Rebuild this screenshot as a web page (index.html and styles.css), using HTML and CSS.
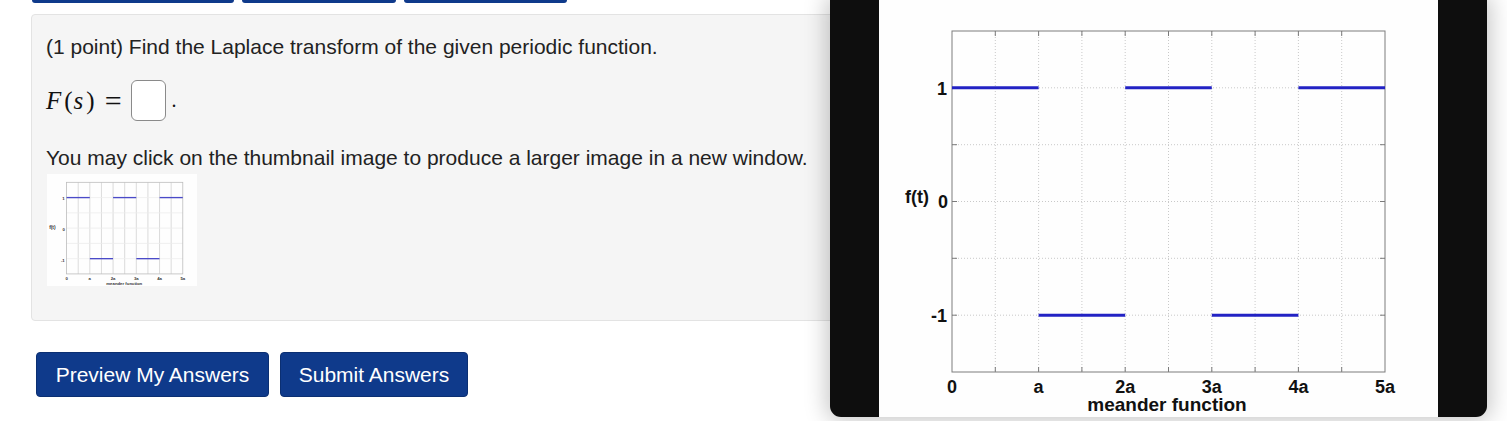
FILE: index.html
```html
<!DOCTYPE html>
<html lang="en">
<head>
<meta charset="utf-8">
<title>Laplace transform problem</title>
<link rel="stylesheet" href="styles.css">
</head>
<body>
<div class="topnav">
  <span class="tbtn w1"></span>
  <span class="tbtn w2"></span>
  <span class="tbtn w3"></span>
</div>

<div class="well">
  <p class="line first">(1 point) Find the Laplace transform of the given periodic function.</p>
  <div class="math">
    <span class="mi f">F</span><span class="mo">(</span><span class="mi s">s</span><span class="mo">)</span>
    <span class="eq">=</span>
    <span class="ans"></span>
    <span class="dot">.</span>
  </div>
  <p class="line second">You may click on the thumbnail image to produce a larger image in a new window.</p>
  <svg class="thumb" viewBox="0 0 559 417" preserveAspectRatio="none">
    <rect class="bg" x="0" y="0" width="559" height="417"/>
    <g class="grid tgrid">
      <line x1="116.3" y1="31" x2="116.3" y2="372"/>
      <line x1="159.6" y1="31" x2="159.6" y2="372"/>
      <line x1="202.9" y1="31" x2="202.9" y2="372"/>
      <line x1="246.2" y1="31" x2="246.2" y2="372"/>
      <line x1="289.5" y1="31" x2="289.5" y2="372"/>
      <line x1="332.8" y1="31" x2="332.8" y2="372"/>
      <line x1="376.1" y1="31" x2="376.1" y2="372"/>
      <line x1="419.4" y1="31" x2="419.4" y2="372"/>
      <line x1="462.7" y1="31" x2="462.7" y2="372"/>
    </g>
    <g class="grid thgrid">
      <line x1="73" y1="87.8" x2="506" y2="87.8"/>
      <line x1="73" y1="144.7" x2="506" y2="144.7"/>
      <line x1="73" y1="201.5" x2="506" y2="201.5"/>
      <line x1="73" y1="258.3" x2="506" y2="258.3"/>
      <line x1="73" y1="315.2" x2="506" y2="315.2"/>
    </g>
    <rect class="axis" x="73" y="31" width="433" height="341"/>
    <g class="sig tsig">
      <line x1="73" y1="87.8" x2="159.6" y2="87.8"/>
      <line x1="246.2" y1="87.8" x2="332.8" y2="87.8"/>
      <line x1="419.4" y1="87.8" x2="506" y2="87.8"/>
      <line x1="159.6" y1="315.2" x2="246.2" y2="315.2"/>
      <line x1="332.8" y1="315.2" x2="419.4" y2="315.2"/>
    </g>
    <g class="lbl tlbl">
      <text class="end" x="66" y="97">1</text>
      <text class="end" x="67" y="212">0</text>
      <text class="end" x="66" y="326">-1</text>
      <text class="ylab" x="8" y="206">f(t)</text>
      <text class="mid" x="73" y="394">0</text>
      <text class="mid" x="159.6" y="394">a</text>
      <text class="mid" x="246.2" y="394">2a</text>
      <text class="mid" x="332.8" y="394">3a</text>
      <text class="mid" x="419.4" y="394">4a</text>
      <text class="mid" x="506" y="394">5a</text>
      <text class="mid" x="288" y="414">meander function</text>
    </g>
  </svg>
</div>

<div class="actions">
  <button class="btn preview">Preview My Answers</button>
  <button class="btn submit">Submit Answers</button>
</div>

<div class="overlay">
  <div class="frame">
    <svg class="big" viewBox="0 0 559 417">
      <rect class="bg" x="0" y="0" width="559" height="417"/>
      <g class="grid">
        <line x1="116.3" y1="31" x2="116.3" y2="372"/>
        <line x1="159.6" y1="31" x2="159.6" y2="372"/>
        <line x1="202.9" y1="31" x2="202.9" y2="372"/>
        <line x1="246.2" y1="31" x2="246.2" y2="372"/>
        <line x1="289.5" y1="31" x2="289.5" y2="372"/>
        <line x1="332.8" y1="31" x2="332.8" y2="372"/>
        <line x1="376.1" y1="31" x2="376.1" y2="372"/>
        <line x1="419.4" y1="31" x2="419.4" y2="372"/>
        <line x1="462.7" y1="31" x2="462.7" y2="372"/>
        <line x1="73" y1="87.8" x2="506" y2="87.8"/>
        <line x1="73" y1="144.7" x2="506" y2="144.7"/>
        <line x1="73" y1="201.5" x2="506" y2="201.5"/>
        <line x1="73" y1="258.3" x2="506" y2="258.3"/>
        <line x1="73" y1="315.2" x2="506" y2="315.2"/>
      </g>
      <g class="tick">
        <path d="M116.3 31v5M159.6 31v5M202.9 31v5M246.2 31v5M289.5 31v5M332.8 31v5M376.1 31v5M419.4 31v5M462.7 31v5"/>
        <path d="M116.3 372v-5M159.6 372v-5M202.9 372v-5M246.2 372v-5M289.5 372v-5M332.8 372v-5M376.1 372v-5M419.4 372v-5M462.7 372v-5"/>
        <path d="M73 87.8h5M73 144.7h5M73 201.5h5M73 258.3h5M73 315.2h5"/>
        <path d="M506 87.8h-5M506 144.7h-5M506 201.5h-5M506 258.3h-5M506 315.2h-5"/>
      </g>
      <rect class="axis" x="73" y="31" width="433" height="341"/>
      <g class="sig">
        <line x1="73" y1="87.8" x2="159.6" y2="87.8"/>
        <line x1="246.2" y1="87.8" x2="332.8" y2="87.8"/>
        <line x1="419.4" y1="87.8" x2="506" y2="87.8"/>
        <line x1="159.6" y1="315.2" x2="246.2" y2="315.2"/>
        <line x1="332.8" y1="315.2" x2="419.4" y2="315.2"/>
      </g>
      <g class="lbl">
        <text class="end" x="68" y="95">1</text>
        <text class="end" x="69" y="208">0</text>
        <text class="end" x="68" y="322">-1</text>
        <text class="ylab" x="26" y="203">f(t)</text>
        <text class="mid" x="73" y="393">0</text>
        <text class="mid" x="159.6" y="393">a</text>
        <text class="mid" x="246.2" y="393">2a</text>
        <text class="mid" x="332.8" y="393">3a</text>
        <text class="mid" x="419.4" y="393">4a</text>
        <text class="mid" x="506" y="393">5a</text>
        <text class="mid big-title" x="288" y="411">meander function</text>
      </g>
    </svg>
  </div>
</div>
</body>
</html>
```

FILE: styles.css
```css
html, body {
  margin: 0;
  padding: 0;
  background: #ffffff;
}
body {
  font-family: "Liberation Sans", Arial, sans-serif;
  color: #222222;
  width: 1507px;
  height: 421px;
  overflow: hidden;
  position: relative;
}
.topnav {
  display: flex;
  gap: 8px;
  height: 3px;
  padding-left: 32px;
  overflow: hidden;
}
.tbtn {
  display: block;
  height: 3px;
  background: #0f3a8b;
  border-radius: 0 0 4px 4px;
}
.w1 { width: 202px; }
.w2 { width: 154px; }
.w3 { width: 163px; }

.well {
  margin: 11px 31px 0 31px;
  height: 307px;
  box-sizing: border-box;
  background: #f5f5f5;
  border: 1px solid #e3e3e3;
  border-radius: 4px;
  padding: 17px 15px 0 14px;
  display: flex;
  flex-direction: column;
  align-items: flex-start;
}
.line {
  margin: 0;
  font-size: 21px;
  line-height: 30px;
  white-space: nowrap;
}
.math {
  margin-top: 18px;
  height: 41px;
  display: flex;
  align-items: center;
  font-family: "Liberation Serif", "Times New Roman", serif;
  font-size: 25px;
  color: #111;
}
.mi { font-style: italic; }
.f { margin-right: 3px; }
.s { margin: 0 3px 0 1px; }
.mo { font-style: normal; }
.eq { margin: 0 9px 0 10px; font-size: 30px; }
.ans {
  width: 33px;
  height: 39px;
  border: 1px solid #8a8a8a;
  border-radius: 6px;
  background: #ffffff;
}
.dot { margin-left: 6px; font-size: 20px; }
.second { margin-top: 22px; }
.thumb {
  margin-top: 1px;
  margin-left: 1px;
  width: 150px;
  height: 112px;
  display: block;
}

.actions {
  display: flex;
  gap: 11px;
  margin: 31px 0 0 36px;
}
.btn {
  height: 45px;
  background: #0f3a8b;
  color: #ffffff;
  border: 1px solid #0b2f72;
  border-radius: 4px;
  font-family: "Liberation Sans", Arial, sans-serif;
  font-size: 21px;
  padding: 0;
  text-align: center;
}
.preview { width: 233px; }
.submit { width: 188px; }

.overlay {
  position: absolute;
  left: 830px;
  top: 0;
  width: 657px;
  height: 417px;
  background: #0e0e0e;
  border-radius: 0 0 11px 11px;
  box-shadow: 0 0 22px 4px rgba(0, 0, 0, 0.22);
  display: flex;
  justify-content: center;
}
.frame {
  width: 559px;
  height: 417px;
  background: #fefefe;
}
.big {
  display: block;
  width: 559px;
  height: 417px;
}

.bg { fill: #fefefe; }
.grid line {
  stroke: #c9c9c9;
  stroke-width: 1;
  stroke-dasharray: 1 2;
}
.tgrid line {
  stroke: #d2d2d2;
  stroke-width: 3;
  stroke-dasharray: none;
}
.thgrid line {
  stroke: #ececec;
  stroke-width: 3;
  stroke-dasharray: none;
}
.tick path {
  stroke: #7a7a7a;
  stroke-width: 1;
  fill: none;
}
.axis {
  fill: none;
  stroke: #7c7c7c;
  stroke-width: 1;
}
.thumb .axis { stroke-width: 3; stroke: #bdbdbd; }
.sig line {
  stroke: #2222c4;
  stroke-width: 3;
}
.tsig line {
  stroke: #4a4ac8;
  stroke-width: 5;
}
.lbl text {
  font-family: "Liberation Sans", Arial, sans-serif;
  font-weight: bold;
  font-size: 18px;
  fill: #111111;
}
.lbl .end { text-anchor: end; }
.lbl .mid { text-anchor: middle; }
.lbl .ylab { font-size: 18px; }
.lbl .big-title { font-size: 19px; }
.tlbl text { font-size: 16px; fill: #333; }
```
